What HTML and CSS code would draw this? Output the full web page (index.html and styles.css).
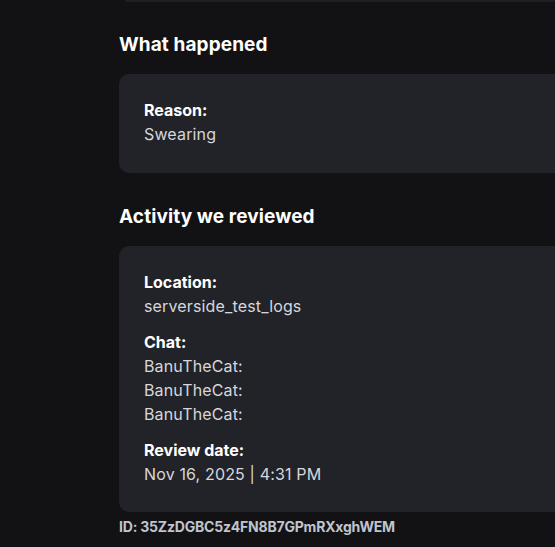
FILE: index.html
```html
<!DOCTYPE html>
<html>
<head>
<meta charset="utf-8">
<link rel="stylesheet" href="styles.css">
</head>
<body>
<div class="page">
  <div class="top-card"></div>
  <h2 class="section-title first">What happened</h2>
  <div class="card card-short">
    <div class="field">
      <div class="label">Reason:</div>
      <div class="value">Swearing</div>
    </div>
  </div>
  <h2 class="section-title">Activity we reviewed</h2>
  <div class="card">
    <div class="field">
      <div class="label">Location:</div>
      <div class="value">serverside_test_logs</div>
    </div>
    <div class="field">
      <div class="label">Chat:</div>
      <div class="value">BanuTheCat:</div>
      <div class="value">BanuTheCat:</div>
      <div class="value">BanuTheCat:</div>
    </div>
    <div class="field">
      <div class="label">Review date:</div>
      <div class="value">Nov 16, 2025 | 4:31 PM</div>
    </div>
  </div>
  <div class="id-line">ID: 35ZzDGBC5z4FN8B7GPmRXxghWEM</div>
</div>
</body>
</html>
```

FILE: styles.css
```css
html, body {
  margin: 0;
  padding: 0;
  background: #121215;
  overflow: hidden;
}
body {
  font-family: "Inter", "Noto Sans", sans-serif;
  color: #ffffff;
}
.page {
  width: 700px;
  padding-left: 119px;
}
.top-card {
  height: 2px;
  margin-left: 6px;
  background: #1e1f24;
  border-bottom-left-radius: 3px;
}
.section-title {
  margin: 0;
  font-size: 19px;
  font-weight: 700;
  line-height: 24px;
  color: #ffffff;
  padding: 32px 0 17px;
  letter-spacing: 0.1px;
}
.section-title.first {
  padding-top: 31px;
}
.card {
  background: #222328;
  border-radius: 10px;
  padding: 24px 25px 26px;
  display: flex;
  flex-direction: column;
  gap: 12px;
}
.card-short {
  padding-bottom: 27px;
}
.label {
  font-size: 16px;
  font-weight: 700;
  line-height: 24px;
  color: #ffffff;
}
.value {
  font-size: 16px;
  font-weight: 400;
  line-height: 24px;
  color: #d6d7db;
  letter-spacing: 0.15px;
}
.id-line {
  padding-top: 5px;
  font-size: 14px;
  font-weight: 700;
  line-height: 20px;
  color: #c0c4cd;
  letter-spacing: -0.2px;
}
```
